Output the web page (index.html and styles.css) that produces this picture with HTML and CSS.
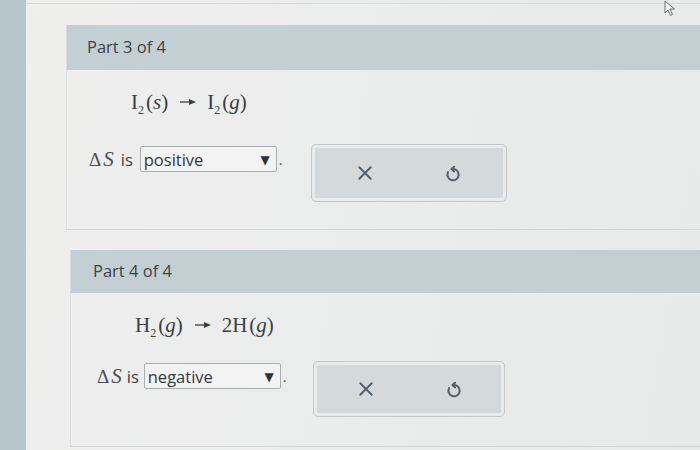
FILE: index.html
```html
<!DOCTYPE html>
<html>
<head>
<meta charset="utf-8">
<link rel="stylesheet" href="styles.css">
</head>
<body>
<div class="screen">
  <div class="strip"></div>
  <div class="main">
    <div class="topline"></div>
    <section class="card card1">
      <div class="card-head">Part 3 of 4</div>
      <div class="card-body">
        <div class="eq">I<sub>2</sub><span class="par">(<i>s</i>)</span><svg class="arrow" width="16" height="8" viewBox="0 0 16 8"><path d="M0 4 H10" stroke="#3a3f44" stroke-width="1.3"/><path d="M9 1 L16 4 L9 7 Z" fill="#3a3f44"/></svg>I<sub>2</sub><span class="par">(<i>g</i>)</span></div>
        <div class="row">
          <div class="answer">
            <span class="ds"><span class="delta">Δ</span><i>S</i></span>
            <span class="is">is</span>
            <span class="select">positive<span class="caret">▼</span></span>
            <span class="dot">.</span>
          </div>
          <div class="btns">
            <span class="btn"><svg width="16" height="16" viewBox="0 0 14 14"><path d="M2 2 L12 12 M12 2 L2 12" stroke="#52606c" stroke-width="1.7" fill="none" stroke-linecap="round"/></svg></span>
            <span class="btn"><svg width="16" height="18" viewBox="0 0 14 16"><path d="M6.5 4.5 A5 5 0 1 1 2.6 7.2" stroke="#52606c" stroke-width="1.8" fill="none" stroke-linecap="round"/><path d="M8 2.4 L5.6 4.5 L8 6.6" stroke="#52606c" stroke-width="1.8" fill="none" stroke-linecap="round" stroke-linejoin="round"/></svg></span>
          </div>
        </div>
      </div>
    </section>
    <section class="card card2">
      <div class="card-head">Part 4 of 4</div>
      <div class="card-body">
        <div class="eq">H<sub>2</sub><span class="par">(<i>g</i>)</span><svg class="arrow" width="16" height="8" viewBox="0 0 16 8"><path d="M0 4 H10" stroke="#3a3f44" stroke-width="1.3"/><path d="M9 1 L16 4 L9 7 Z" fill="#3a3f44"/></svg>2H<span class="par">(<i>g</i>)</span></div>
        <div class="row">
          <div class="answer">
            <span class="ds"><span class="delta">Δ</span><i>S</i></span>
            <span class="is">is</span>
            <span class="select">negative<span class="caret">▼</span></span>
            <span class="dot">.</span>
          </div>
          <div class="btns">
            <span class="btn"><svg width="16" height="16" viewBox="0 0 14 14"><path d="M2 2 L12 12 M12 2 L2 12" stroke="#52606c" stroke-width="1.7" fill="none" stroke-linecap="round"/></svg></span>
            <span class="btn"><svg width="16" height="18" viewBox="0 0 14 16"><path d="M6.5 4.5 A5 5 0 1 1 2.6 7.2" stroke="#52606c" stroke-width="1.8" fill="none" stroke-linecap="round"/><path d="M8 2.4 L5.6 4.5 L8 6.6" stroke="#52606c" stroke-width="1.8" fill="none" stroke-linecap="round" stroke-linejoin="round"/></svg></span>
          </div>
        </div>
      </div>
    </section>
  </div>
  <svg class="cursor" width="14" height="18" viewBox="0 0 14 18"><path d="M1 1 L1 13 L4 10 L6.5 15.5 L8.5 14.5 L6 9 L10.5 9 Z" fill="#f4f4f4" stroke="#6a6f74" stroke-width="1"/></svg>
</div>
</body>
</html>
```
FILE: styles.css
```css
html, body {
  margin: 0;
  padding: 0;
}
body {
  width: 700px;
  height: 450px;
  overflow: hidden;
  background: #ecedec;
  font-family: "Open Sans", "DejaVu Sans", sans-serif;
  color: #3a3f44;
}
.screen {
  position: relative;
  display: flex;
  width: 700px;
  height: 450px;
  background: linear-gradient(100deg, #efefee 0%, #ebecec 50%, #e8e9e9 100%);
}
.strip {
  width: 26px;
  flex: none;
  background: #b7c6ca;
}
.main {
  flex: 1;
  display: flex;
  flex-direction: column;
}
.topline {
  height: 3px;
  border-bottom: 1px solid #d6d9da;
  margin-bottom: 21px;
}
.card {
  border-bottom: 1px solid #d3d7d8;
  border-left: 1px solid #dadddd;
}
.card1 {
  margin-left: 40px;
  height: 204px;
}
.card2 {
  margin-left: 44px;
  margin-top: 20px;
  height: 196px;
}
.card-head {
  height: 45px;
  display: flex;
  align-items: center;
  padding-left: 20px;
  padding-bottom: 3px;
  box-sizing: border-box;
  background: #c4cfd3;
  font-size: 16.5px;
  color: #3c4248;
}
.card2 .card-head {
  height: 43px;
  padding-left: 22px;
}
.card-body {
  padding-left: 22px;
}
.eq {
  font-family: "Liberation Serif", "DejaVu Serif", serif;
  font-size: 21px;
  color: #3a3f44;
  padding-left: 42px;
  padding-top: 20px;
  height: 30px;
}
.eq sub {
  font-size: 12px;
  vertical-align: -5px;
}
.eq .par {
  margin-left: 2px;
}
.eq .arrow {
  margin: 0 11px 0 12px;
  vertical-align: 3px;
}
.row {
  display: flex;
  align-items: flex-start;
  margin-top: 24px;
}
.card1 .answer .is {
  margin-left: 7px;
  margin-right: 7px;
}
.card2 .row {
  margin-top: 18px;
  padding-left: 4px;
}
.answer {
  display: flex;
  align-items: center;
  height: 26px;
  margin-top: 2px;
}
.ds {
  font-family: "Liberation Serif", "DejaVu Serif", serif;
  font-size: 21px;
  color: #4a5056;
}
.delta {
  font-size: 19px;
  margin-right: 2px;
}
.is {
  font-size: 16.5px;
  margin-left: 5px;
  margin-right: 5px;
}
.select {
  box-sizing: border-box;
  width: 137px;
  height: 26px;
  border: 1px solid #a9aeb1;
  border-radius: 2px;
  background: #f3f3f3;
  display: flex;
  align-items: center;
  justify-content: space-between;
  padding: 0 6px 0 3px;
  font-size: 16.5px;
  color: #33383d;
}
.caret {
  font-size: 12px;
  color: #2f3337;
}
.dot {
  margin-left: 2px;
  font-size: 15px;
  color: #555;
}
.btns {
  box-sizing: border-box;
  margin-left: 28px;
  width: 196px;
  height: 58px;
  border: 1px solid #c3c8ca;
  border-radius: 5px;
  background: #d4d9db;
  box-shadow: inset 0 0 0 3px #e9ebeb;
  display: flex;
  align-items: center;
  justify-content: space-between;
  padding: 0 33px;
}
.card2 .btns {
  margin-left: 26px;
  width: 192px;
  height: 56px;
  padding: 0 30px 0 32px;
}
.btn {
  display: flex;
  align-items: center;
  justify-content: center;
  width: 40px;
  height: 30px;
}
.cursor {
  position: absolute;
  top: 0;
  left: 664px;
}
```
